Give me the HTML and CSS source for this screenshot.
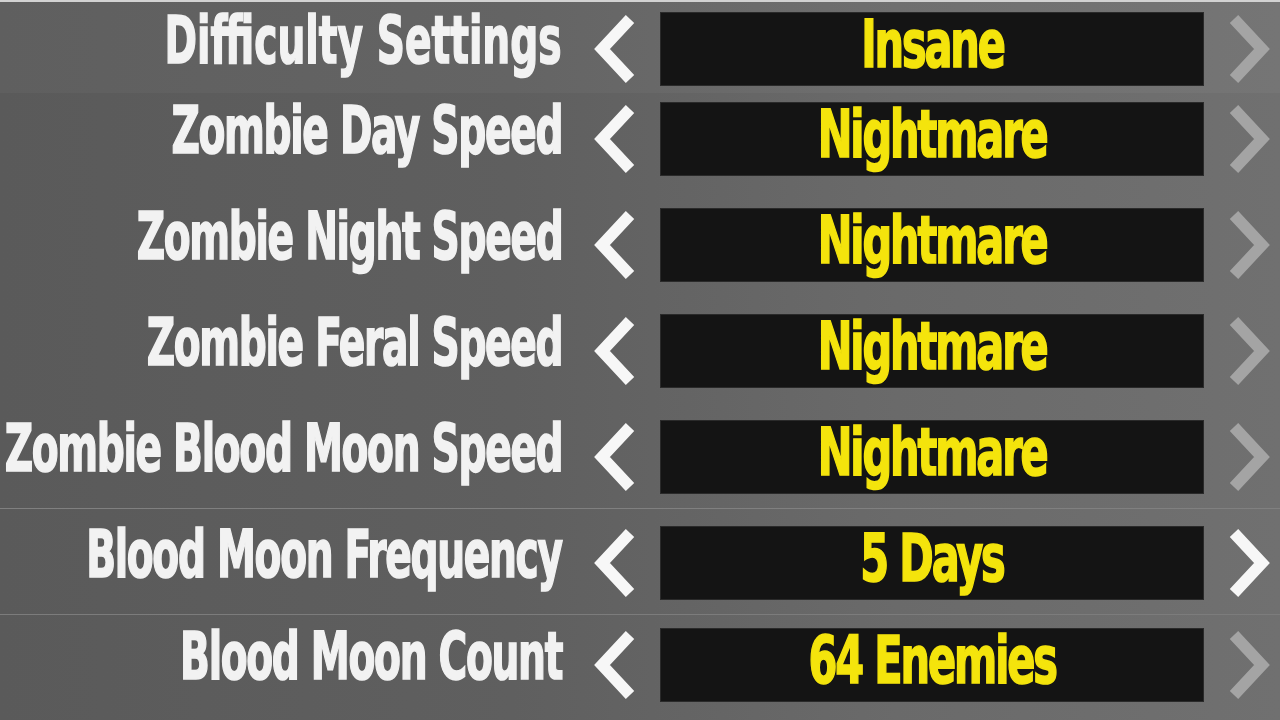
FILE: index.html
```html
<!DOCTYPE html>
<html>
<head>
<meta charset="utf-8">
<link rel="stylesheet" href="styles.css">
</head>
<body>
<div class="screen">
  <section class="group group-top">
    <div class="row">
      <div class="label"><span class="squeeze loose">Difficulty Settings</span></div>
      <div class="arrow arrow-left"><svg viewBox="0 0 46 72"><polyline points="38,6 10,36 38,66"/></svg></div>
      <div class="value"><span class="squeeze">Insane</span></div>
      <div class="arrow arrow-right dim"><svg viewBox="0 0 46 72"><polyline points="8,6 36,36 8,66"/></svg></div>
    </div>
  </section>
  <section class="group group-main">
    <div class="row">
      <div class="label"><span class="squeeze">Zombie Day Speed</span></div>
      <div class="arrow arrow-left"><svg viewBox="0 0 46 72"><polyline points="38,6 10,36 38,66"/></svg></div>
      <div class="value"><span class="squeeze">Nightmare</span></div>
      <div class="arrow arrow-right dim"><svg viewBox="0 0 46 72"><polyline points="8,6 36,36 8,66"/></svg></div>
    </div>
    <div class="row">
      <div class="label"><span class="squeeze">Zombie Night Speed</span></div>
      <div class="arrow arrow-left"><svg viewBox="0 0 46 72"><polyline points="38,6 10,36 38,66"/></svg></div>
      <div class="value"><span class="squeeze">Nightmare</span></div>
      <div class="arrow arrow-right dim"><svg viewBox="0 0 46 72"><polyline points="8,6 36,36 8,66"/></svg></div>
    </div>
    <div class="row">
      <div class="label"><span class="squeeze">Zombie Feral Speed</span></div>
      <div class="arrow arrow-left"><svg viewBox="0 0 46 72"><polyline points="38,6 10,36 38,66"/></svg></div>
      <div class="value"><span class="squeeze">Nightmare</span></div>
      <div class="arrow arrow-right dim"><svg viewBox="0 0 46 72"><polyline points="8,6 36,36 8,66"/></svg></div>
    </div>
    <div class="row">
      <div class="label"><span class="squeeze">Zombie Blood Moon Speed</span></div>
      <div class="arrow arrow-left"><svg viewBox="0 0 46 72"><polyline points="38,6 10,36 38,66"/></svg></div>
      <div class="value"><span class="squeeze">Nightmare</span></div>
      <div class="arrow arrow-right dim"><svg viewBox="0 0 46 72"><polyline points="8,6 36,36 8,66"/></svg></div>
    </div>
  </section>
  <section class="group group-freq">
    <div class="row">
      <div class="label"><span class="squeeze">Blood Moon Frequency</span></div>
      <div class="arrow arrow-left"><svg viewBox="0 0 46 72"><polyline points="38,6 10,36 38,66"/></svg></div>
      <div class="value"><span class="squeeze">5 Days</span></div>
      <div class="arrow arrow-right"><svg viewBox="0 0 46 72"><polyline points="8,6 36,36 8,66"/></svg></div>
    </div>
  </section>
  <section class="group group-count">
    <div class="row">
      <div class="label"><span class="squeeze">Blood Moon Count</span></div>
      <div class="arrow arrow-left"><svg viewBox="0 0 46 72"><polyline points="38,6 10,36 38,66"/></svg></div>
      <div class="value"><span class="squeeze">64 Enemies</span></div>
      <div class="arrow arrow-right dim"><svg viewBox="0 0 46 72"><polyline points="8,6 36,36 8,66"/></svg></div>
    </div>
  </section>
</div>
</body>
</html>
```
FILE: styles.css
```css
html, body {
  margin: 0;
  padding: 0;
}
body {
  width: 1280px;
  height: 720px;
  overflow: hidden;
  background: #5e5e5e;
  font-family: "DejaVu Sans Condensed", "DejaVu Sans", sans-serif;
  font-weight: bold;
}
.screen {
  width: 1280px;
  height: 720px;
  background: linear-gradient(to right, #5a5a5a 0%, #5f5f5f 40%, #6a6a6a 70%, #707070 100%);
  border-top: 2px solid #d2d2d2;
  box-sizing: border-box;
  display: flex;
  flex-direction: column;
  overflow: hidden;
}
.group {
  display: flex;
  flex-direction: column;
}
.group-top {
  height: 91px;
  padding-top: 10px;
  box-sizing: border-box;
  background: rgba(255, 255, 255, 0.035);
}
.group-main {
  height: 415px;
  padding-top: 9px;
  gap: 32px;
  box-sizing: border-box;
}
.group-freq {
  height: 106px;
  border-top: 1px solid #808080;
  padding-top: 17px;
  box-sizing: border-box;
}
.group-count {
  flex: 1;
  border-top: 1px solid #7c7c7c;
  padding-top: 13px;
  box-sizing: border-box;
}
.row {
  display: flex;
  align-items: center;
  height: 74px;
}
.squeeze {
  display: inline-block;
  white-space: nowrap;
  -webkit-text-stroke: 1.6px currentColor;
}
.label {
  width: 562px;
  height: 74px;
  flex: none;
  display: flex;
  justify-content: flex-end;
  color: #f2f2f2;
  font-size: 65px;
  letter-spacing: -2px;
  line-height: 58px;
}
.label .squeeze {
  transform: scaleX(0.67);
  transform-origin: right center;
}
.label .squeeze.loose {
  letter-spacing: 0;
}
.arrow {
  width: 46px;
  height: 72px;
  flex: none;
  display: flex;
}
.arrow svg {
  width: 46px;
  height: 72px;
}
.arrow polyline {
  fill: none;
  stroke: #f7f7f7;
  stroke-width: 11.5;
  stroke-linejoin: miter;
  stroke-linecap: butt;
}
.arrow.dim polyline {
  stroke: #a4a4a4;
}
.arrow-left {
  margin-left: 30px;
}
.arrow-right {
  margin-left: 22px;
}
.value {
  margin-left: 22px;
  width: 544px;
  height: 74px;
  flex: none;
  box-sizing: border-box;
  background: #141414;
  border: 1px solid #2a2a2a;
  color: #f4e40c;
  font-size: 65px;
  letter-spacing: -3px;
  line-height: 64px;
  display: flex;
  justify-content: center;
}
.value .squeeze {
  transform: scaleX(0.71);
  transform-origin: center center;
}
```
